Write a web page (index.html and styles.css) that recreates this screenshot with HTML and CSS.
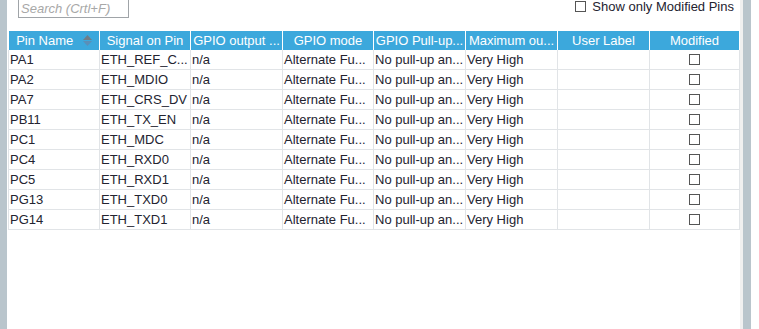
FILE: index.html
```html
<!DOCTYPE html>
<html lang="en">
<head>
    <meta charset="UTF-8">
    <title>Pin Configuration</title>
    <link rel="stylesheet" href="styles.css">
</head>
<body>
    <div class="rail"></div>

    <div class="panel">
        <div class="toolbar">
            <input class="search" type="text" placeholder="Search (Crtl+F)">
            <label class="filter">
                <span class="box"></span>
                Show only Modified Pins
            </label>
        </div>

        <div class="pins">
            <div class="row head">
                <div class="cell">Pin Name
                    <svg class="sort" width="9" height="11" viewBox="0 0 9 11">
                        <polygon points="4.5,0 9,5 0,5" fill="#6f7d88"/>
                        <polygon points="0,6 9,6 4.5,11" fill="#5a8fb8"/>
                    </svg>
                </div>
                <div class="cell">Signal on Pin</div>
                <div class="cell" title="GPIO output level">GPIO output ...</div>
                <div class="cell">GPIO mode</div>
                <div class="cell" title="GPIO Pull-up/Pull-down">GPIO Pull-up...</div>
                <div class="cell" title="Maximum output speed">Maximum ou...</div>
                <div class="cell">User Label</div>
                <div class="cell">Modified</div>
            </div>

            <div class="row">
                <div class="cell">PA1</div><div class="cell" title="ETH_REF_CLK">ETH_REF_C...</div><div class="cell">n/a</div>
                <div class="cell">Alternate Fu...</div><div class="cell">No pull-up an...</div>
                <div class="cell">Very High</div><div class="cell"></div><div class="cell check"><span class="box"></span></div>
            </div>
            <div class="row">
                <div class="cell">PA2</div><div class="cell">ETH_MDIO</div><div class="cell">n/a</div>
                <div class="cell">Alternate Fu...</div><div class="cell">No pull-up an...</div>
                <div class="cell">Very High</div><div class="cell"></div><div class="cell check"><span class="box"></span></div>
            </div>
            <div class="row">
                <div class="cell">PA7</div><div class="cell">ETH_CRS_DV</div><div class="cell">n/a</div>
                <div class="cell">Alternate Fu...</div><div class="cell">No pull-up an...</div>
                <div class="cell">Very High</div><div class="cell"></div><div class="cell check"><span class="box"></span></div>
            </div>
            <div class="row">
                <div class="cell">PB11</div><div class="cell">ETH_TX_EN</div><div class="cell">n/a</div>
                <div class="cell">Alternate Fu...</div><div class="cell">No pull-up an...</div>
                <div class="cell">Very High</div><div class="cell"></div><div class="cell check"><span class="box"></span></div>
            </div>
            <div class="row">
                <div class="cell">PC1</div><div class="cell">ETH_MDC</div><div class="cell">n/a</div>
                <div class="cell">Alternate Fu...</div><div class="cell">No pull-up an...</div>
                <div class="cell">Very High</div><div class="cell"></div><div class="cell check"><span class="box"></span></div>
            </div>
            <div class="row">
                <div class="cell">PC4</div><div class="cell">ETH_RXD0</div><div class="cell">n/a</div>
                <div class="cell">Alternate Fu...</div><div class="cell">No pull-up an...</div>
                <div class="cell">Very High</div><div class="cell"></div><div class="cell check"><span class="box"></span></div>
            </div>
            <div class="row">
                <div class="cell">PC5</div><div class="cell">ETH_RXD1</div><div class="cell">n/a</div>
                <div class="cell">Alternate Fu...</div><div class="cell">No pull-up an...</div>
                <div class="cell">Very High</div><div class="cell"></div><div class="cell check"><span class="box"></span></div>
            </div>
            <div class="row">
                <div class="cell">PG13</div><div class="cell">ETH_TXD0</div><div class="cell">n/a</div>
                <div class="cell">Alternate Fu...</div><div class="cell">No pull-up an...</div>
                <div class="cell">Very High</div><div class="cell"></div><div class="cell check"><span class="box"></span></div>
            </div>
            <div class="row">
                <div class="cell">PG14</div><div class="cell">ETH_TXD1</div><div class="cell">n/a</div>
                <div class="cell">Alternate Fu...</div><div class="cell">No pull-up an...</div>
                <div class="cell">Very High</div><div class="cell"></div><div class="cell check"><span class="box"></span></div>
            </div>
        </div>
    </div>

    <div class="gutter"></div>
    <div class="scrollbar"></div>
</body>
</html>
```

FILE: styles.css
```css
body {
    margin: 0;
    height: 329px;
    overflow: hidden;
    display: flex;
    background: #fff;
    font-family: "Liberation Sans", Arial, sans-serif;
    font-size: 13px;
    color: #232330;
}

.rail {
    width: 7px;
    background: #b9c5cc;
}

.panel {
    width: 733px;
    display: flex;
    flex-direction: column;
}

.gutter {
    width: 3px;
    background: #f0f0f0;
}

.scrollbar {
    width: 8px;
    background: #b9c5cc;
}

/* top bar: search + filter */
.toolbar {
    height: 32px;
    margin-top: -1px;
    padding: 0 6px 0 11px;
    display: flex;
    justify-content: space-between;
    align-items: flex-start;
}

.search {
    box-sizing: border-box;
    width: 111px;
    height: 19px;
    margin: 0;
    padding: 0 2px;
    border: 1px solid #a0a4a8;
    font-family: "Liberation Sans", Arial, sans-serif;
    font-size: 13px;
    color: #333;
    outline: none;
}

.search::placeholder {
    color: #a8a8a8;
    font-style: italic;
}

.filter {
    display: flex;
    align-items: center;
    gap: 6px;
    line-height: 13px;
    padding-top: 1px;
}

.box {
    box-sizing: border-box;
    display: inline-block;
    width: 11px;
    height: 11px;
    border: 1px solid #555;
    background: #fff;
}

/* pin table */
.pins {
    margin-left: 1px;
}

.row {
    display: grid;
    grid-template-columns: 91px 91px 92px 91px 92px 92px 92px 90px;
    border-left: 1px solid #e1e4e7;
}

.cell {
    box-sizing: border-box;
    height: 20px;
    line-height: 19px;
    padding-left: 1px;
    border-right: 1px solid #e1e4e7;
    border-bottom: 1px solid #e1e4e7;
    white-space: nowrap;
    overflow: hidden;
}

.head {
    border-left-color: #fff;
}

.head .cell {
    height: 19px;
    line-height: 19px;
    padding: 0;
    background: #3ca8dc;
    color: #fff;
    text-align: center;
    border-right-color: #fff;
    border-bottom: none;
}

.sort {
    margin-left: 6px;
    vertical-align: -1px;
}

.check {
    display: flex;
    justify-content: center;
    align-items: center;
    padding: 0;
}
```
